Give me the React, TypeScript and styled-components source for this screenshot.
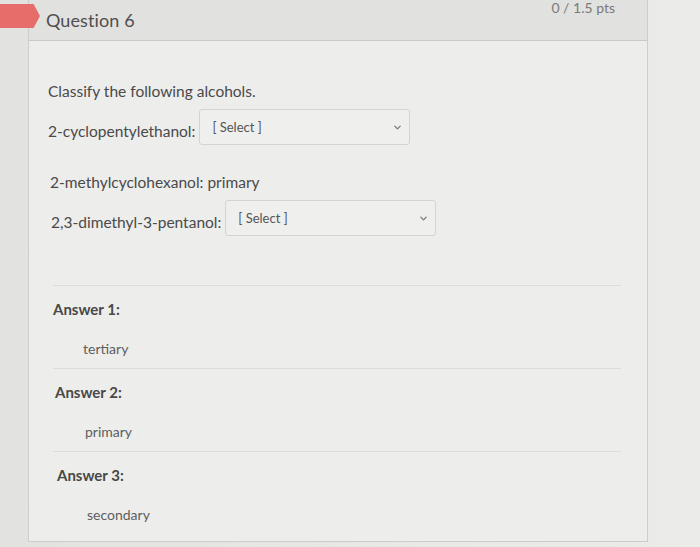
import React, { FC } from "react";
import styled, { createGlobalStyle } from "styled-components";

const GlobalStyle = createGlobalStyle`
  html, body {
    margin: 0;
    padding: 0;
    background: #e7e7e5;
    font-family: Lato, "Open Sans", "Liberation Sans", sans-serif;
    color: #4a4a4a;
  }
  #root {
    width: 700px;
    height: 547px;
    overflow: hidden;
  }
`;

const Page = styled.div`
  display: flex;
  height: 547px;
  background: linear-gradient(90deg, #e2e2e0 0%, #e8e8e6 60%, #ebebe9 100%);
`;

const Gutter = styled.div`
  width: 28px;
  flex-shrink: 0;
  position: relative;
`;

// the red flag sticking out of the gutter
const Flag = styled.div`
  position: absolute;
  left: 0;
  top: 4px;
  width: 40px;
  height: 24px;
  background: #e66d69;
  clip-path: polygon(0 0, 84% 0, 100% 50%, 84% 100%, 0 100%);
  z-index: 2;
`;

const Card = styled.div`
  width: 618px;
  height: 541px;
  border-left: 1px solid #cdcdcb;
  border-right: 1px solid #cdcdcb;
  border-bottom: 1px solid #cdcdcb;
  background: #ededeb;
  display: flex;
  flex-direction: column;
`;

const Header = styled.div`
  height: 40px;
  background: #e1e1df;
  border-bottom: 1px solid #c9c9c7;
  display: flex;
  align-items: center;
  justify-content: space-between;
  padding: 0 32px 0 17px;
`;

const Title = styled.h3`
  margin: 0;
  font-size: 18px;
  font-weight: 400;
  color: #4f4f4f;
  letter-spacing: 0.1px;
`;

const Points = styled.span`
  align-self: flex-start;
  margin-top: 1px;
  font-size: 14px;
  line-height: 14px;
  color: #7a7a7a;
`;

const Body = styled.div`
  padding: 40px 0 0 19px;
  display: flex;
  flex-direction: column;
`;

const Prompt = styled.p`
  margin: 0 0 8px;
  font-size: 15.5px;
  line-height: 20px;
`;

const Row = styled.div<{ indent: number; gap: number }>`
  display: flex;
  align-items: center;
  margin-left: ${p => p.indent}px;
  margin-top: ${p => p.gap}px;
  font-size: 15.5px;
  line-height: 20px;
`;

const Label = styled.span`
  margin-right: 4px;
  padding-top: 8px;
`;

const SelectBox = styled.div`
  width: 211px;
  height: 36px;
  box-sizing: border-box;
  border: 1px solid #d4d4d2;
  border-radius: 3px;
  background: #efefed;
  display: flex;
  align-items: center;
  justify-content: space-between;
  padding: 0 7px 0 12px;
  font-size: 13px;
  color: #555;
`;

const Chevron: FC = () => (
  <svg width="9" height="9" viewBox="0 0 10 10" fill="none">
    <path d="M2 3.5 L5 6.5 L8 3.5" stroke="#777" strokeWidth="1.4" strokeLinecap="round" strokeLinejoin="round" />
  </svg>
);

const Answers = styled.div`
  margin: 49px 26px 0 24px;
  display: flex;
  flex-direction: column;
`;

const AnswerBlock = styled.div<{ shift: number }>`
  border-top: 1px solid #dcdcda;
  padding: 13px 0 10px ${p => p.shift}px;
  height: 59px;
`;

const AnswerLabel = styled.div`
  font-size: 15px;
  font-weight: 700;
  line-height: 20px;
  color: #484848;
`;

const AnswerValue = styled.div`
  margin: 22px 0 0 30px;
  font-size: 14px;
  line-height: 16px;
  color: #5e5e5e;
`;

const answers = [
  { label: "Answer 1:", value: "tertiary", shift: 0 },
  { label: "Answer 2:", value: "primary", shift: 2 },
  { label: "Answer 3:", value: "secondary", shift: 4 },
];

const App: FC = () => (
  <>
    <GlobalStyle />
    <Page>
      <Gutter>
        <Flag />
      </Gutter>
      <Card>
        <Header>
          <Title>Question 6</Title>
          <Points>0 / 1.5 pts</Points>
        </Header>
        <Body>
          <Prompt>Classify the following alcohols.</Prompt>
          <Row indent={0} gap={0}>
            <Label>2-cyclopentylethanol:</Label>
            <SelectBox>
              [ Select ]
              <Chevron />
            </SelectBox>
          </Row>
          <Row indent={2} gap={27}>
            2-methylcyclohexanol: primary
          </Row>
          <Row indent={3} gap={8}>
            <Label>2,3-dimethyl-3-pentanol:</Label>
            <SelectBox>
              [ Select ]
              <Chevron />
            </SelectBox>
          </Row>
        </Body>
        <Answers>
          {answers.map(a => (
            <AnswerBlock key={a.label} shift={a.shift}>
              <AnswerLabel>{a.label}</AnswerLabel>
              <AnswerValue>{a.value}</AnswerValue>
            </AnswerBlock>
          ))}
        </Answers>
      </Card>
    </Page>
  </>
);

export default App;
